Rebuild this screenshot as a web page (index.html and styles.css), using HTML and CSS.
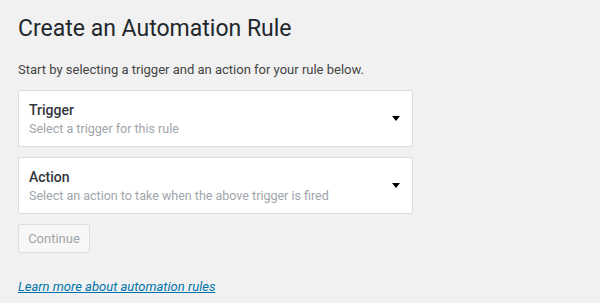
FILE: index.html
```html
<!DOCTYPE html>
<html lang="en">
<head>
<meta charset="utf-8">
<title>Create an Automation Rule</title>
<link rel="stylesheet" href="styles.css">
</head>
<body>
<div class="wrap">
  <h1 class="title">Create an Automation Rule</h1>
  <p class="intro">Start by selecting a trigger and an action for your rule below.</p>
  <div class="select-card">
    <div class="select-text">
      <div class="select-label">Trigger</div>
      <div class="select-desc">Select a trigger for this rule</div>
    </div>
    <span class="caret"></span>
  </div>
  <div class="select-card">
    <div class="select-text">
      <div class="select-label">Action</div>
      <div class="select-desc">Select an action to take when the above trigger is fired</div>
    </div>
    <span class="caret"></span>
  </div>
  <button class="btn" disabled>Continue</button>
  <p class="learn"><a href="#">Learn more about automation rules</a></p>
</div>
</body>
</html>
```
FILE: styles.css
```css
html, body {
  margin: 0;
  padding: 0;
  background: #f1f1f1;
}
body {
  font-family: Roboto, "Noto Sans", sans-serif;
  color: #444;
  font-size: 13px;
}
.wrap {
  padding: 14px 0 0 18px;
  width: 395px;
  display: flex;
  flex-direction: column;
  align-items: flex-start;
}
.title {
  margin: 0;
  font-size: 23px;
  font-weight: 400;
  line-height: 29px;
  color: #23282d;
}
.intro {
  margin: 18px 0 0;
  line-height: 18px;
  color: #444;
}
.select-card {
  box-sizing: border-box;
  width: 395px;
  height: 57px;
  margin-top: 11px;
  background: #fff;
  border: 1px solid #dcdcde;
  border-radius: 2px;
  display: flex;
  align-items: center;
  justify-content: space-between;
  padding: 2px 12px 0 10px;
}
.select-card + .select-card {
  margin-top: 10px;
}
.select-label {
  font-size: 14px;
  font-weight: 500;
  line-height: 19px;
  color: #32373c;
}
.select-desc {
  font-size: 12.5px;
  line-height: 18px;
  color: #a0a5aa;
}
.caret {
  width: 0;
  height: 0;
  border-left: 4.5px solid transparent;
  border-right: 4.5px solid transparent;
  border-top: 5px solid #000;
  margin-top: -2px;
}
.btn {
  margin-top: 10px;
  box-sizing: border-box;
  width: 72px;
  height: 29px;
  font-family: inherit;
  font-size: 13px;
  color: #a0a5aa;
  background: #f7f7f7;
  border: 1px solid #ddd;
  border-radius: 3px;
  padding: 0;
}
.learn {
  margin: 25px 0 0;
  line-height: 18px;
}
.learn a {
  font-style: italic;
  color: #0073aa;
  text-decoration: underline;
}
```
